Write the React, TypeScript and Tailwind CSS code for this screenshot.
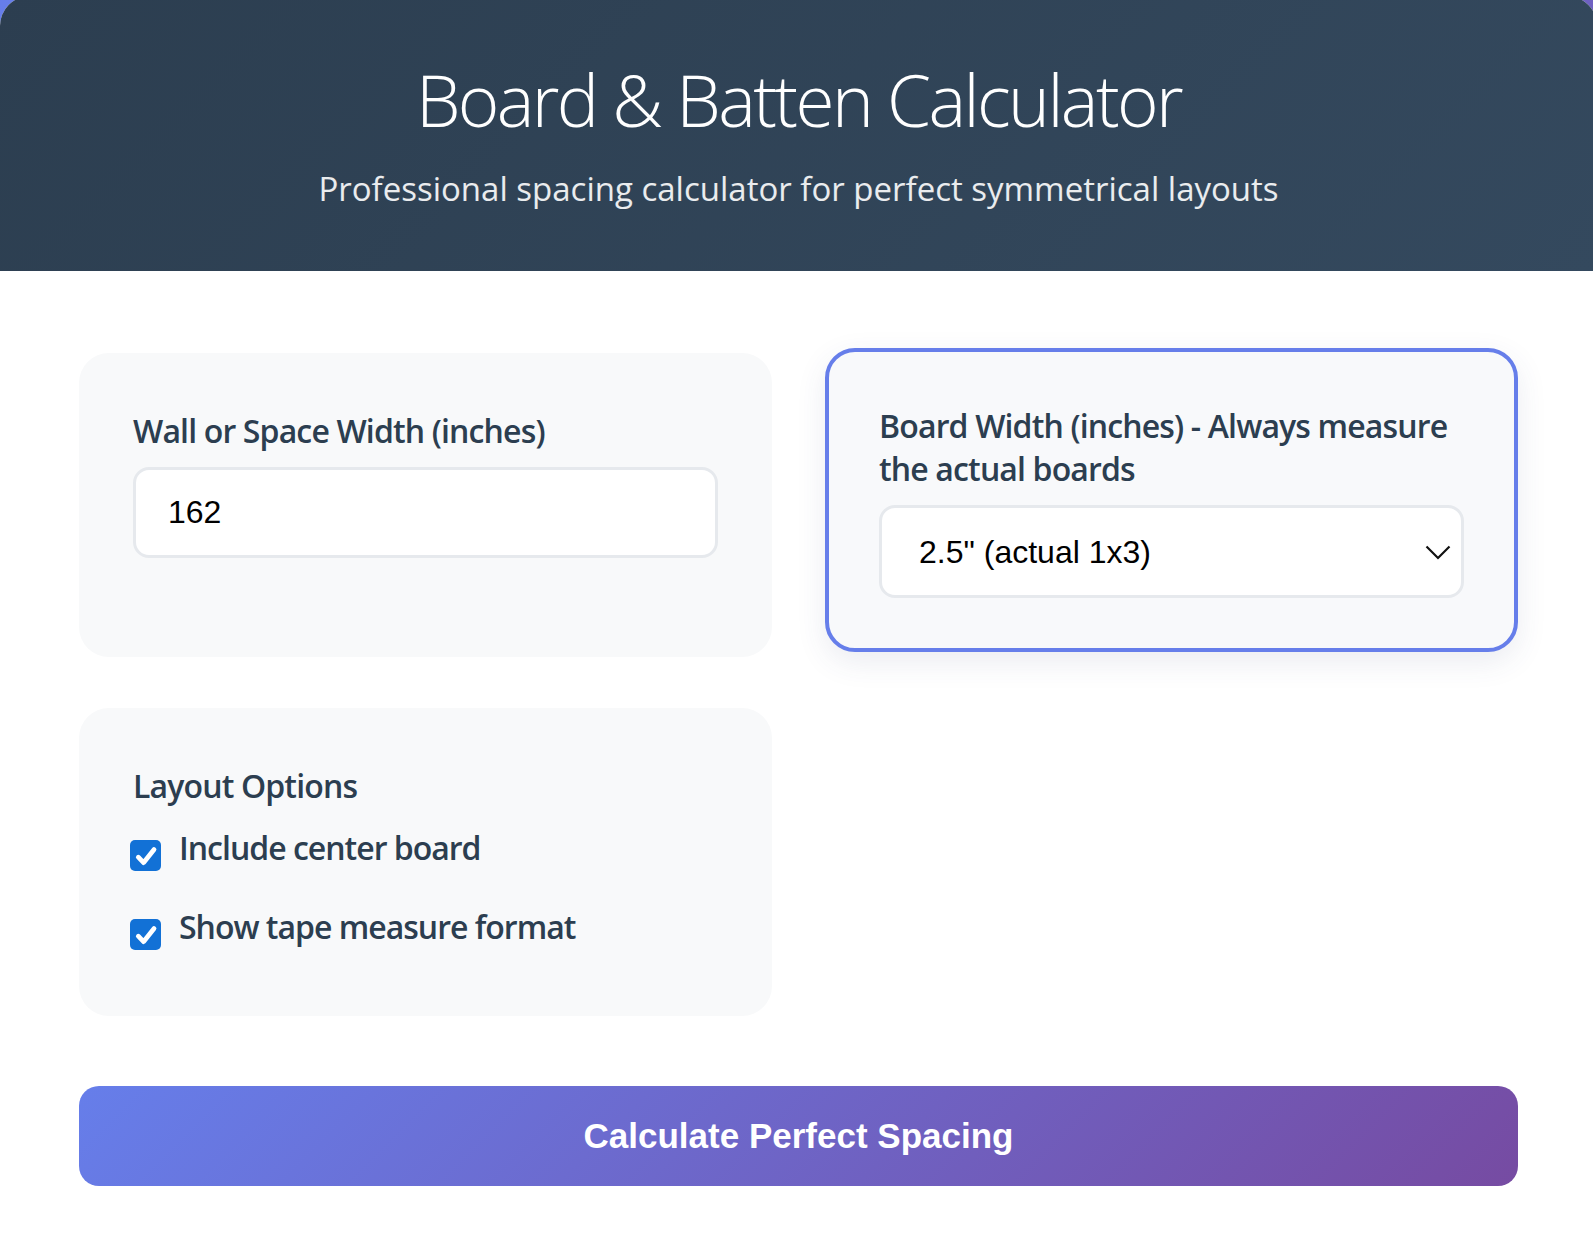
import React from 'react';

function Check() {
  return (
    <span className="mt-[16px] -ml-[3px] flex h-[31px] w-[31px] shrink-0 items-center justify-center rounded-[5px] bg-[#1271d6]">
      <svg width="28" height="28" viewBox="0 0 16 16" fill="none">
        <path d="M3.6 8.7 L6.6 11.8 L12.6 4.3" stroke="#fff" strokeWidth="2.7" strokeLinecap="round" strokeLinejoin="round" />
      </svg>
    </span>
  );
}

function Box() {
  return <span className="mt-[16px] -ml-[3px] h-[31px] w-[31px] shrink-0 rounded-[5px] border-2 border-gray-500 bg-white" />;
}

const labelCls = "block text-[32px] leading-[43px] font-semibold tracking-[-0.85px] text-[#2c3e50] mb-[15px]";
const cardCls = "rounded-[30px] border-[4px] border-transparent bg-[#f8f9fa] px-[50px] pt-[52px] pb-[50px]";

export default function App() {
  const [center, setCenter] = React.useState(true);
  const [tape, setTape] = React.useState(true);

  return (
    <div className="min-h-[1245px] overflow-hidden bg-[linear-gradient(135deg,#667eea_0%,#764ba2_100%)] font-['Open_Sans',sans-serif]">
      <div className="-mt-[4px] min-h-[1249px] w-[1597px] overflow-hidden rounded-t-[30px] bg-white">
        <header className="bg-[linear-gradient(135deg,#2c3e50_0%,#34495e_100%)] pt-[61px] pb-[62px] text-center">
          <h1 className="text-[71px] leading-[85px] font-light tracking-[-2.6px] text-white">Board &amp; Batten Calculator</h1>
          <p className="mt-[27px] text-[33px] leading-[40px] text-white/90">
            Professional spacing calculator for perfect symmetrical layouts
          </p>
        </header>

        <main className="px-[79px] pt-[82px]">
          <div className="grid grid-cols-2 gap-x-[53px] gap-y-[51px]">
            <div className={cardCls}>
              <label className={labelCls}>Wall or Space Width (inches)</label>
              <input
                defaultValue="162"
                className="h-[91px] w-full rounded-[16px] border-[3px] border-[#e6e9ed] bg-white pl-[32px] font-['Liberation_Sans',Arial,sans-serif] text-[32px] text-black outline-none"
              />
            </div>

            <div className="-translate-y-[5px] rounded-[30px] border-[4px] border-[#667eea] bg-[#f8f9fb] px-[50px] pt-[52px] pb-[50px] shadow-[0_10px_30px_rgba(60,70,120,0.10)]">
              <label className={labelCls}>Board Width (inches) - Always measure the actual boards</label>
              <div className="relative">
                <select
                  defaultValue="2.5"
                  className="h-[93px] w-full appearance-none rounded-[16px] border-[3px] border-[#e6e9ed] bg-white pl-[37px] font-['Liberation_Sans',Arial,sans-serif] text-[32px] text-black outline-none"
                >
                  <option value="1.5">1.5" (actual 1x2)</option>
                  <option value="2.5">2.5" (actual 1x3)</option>
                  <option value="3.5">3.5" (actual 1x4)</option>
                </select>
                <svg className="pointer-events-none absolute right-[13px] top-[40px]" width="26" height="15" viewBox="0 0 26 15" fill="none">
                  <path d="M1.5 1.5 L13 13 L24.5 1.5" stroke="#111" strokeWidth="2.2" />
                </svg>
              </div>
            </div>

            <div className={cardCls}>
              <div className={labelCls}>Layout Options</div>
              <div className="flex flex-col gap-[31px] pt-[2px] pb-[11px]">
                <label className="flex h-[48px] cursor-pointer gap-[18px]" onClick={() => setCenter(!center)}>
                  {center ? <Check /> : <Box />}
                  <span className="text-[32px] leading-[48px] font-semibold tracking-[-1px] text-[#2c3e50]">Include center board</span>
                </label>
                <label className="flex h-[48px] cursor-pointer gap-[18px]" onClick={() => setTape(!tape)}>
                  {tape ? <Check /> : <Box />}
                  <span className="text-[32px] leading-[48px] font-semibold tracking-[-1px] text-[#2c3e50]">Show tape measure format</span>
                </label>
              </div>
            </div>
          </div>

          <button className="mt-[70px] h-[100px] w-full rounded-[20px] bg-[linear-gradient(135deg,#667eea_0%,#764ba2_100%)] font-['Liberation_Sans',Arial,sans-serif] text-[35px] font-bold text-white">
            Calculate Perfect Spacing
          </button>
        </main>
      </div>
    </div>
  );
}
